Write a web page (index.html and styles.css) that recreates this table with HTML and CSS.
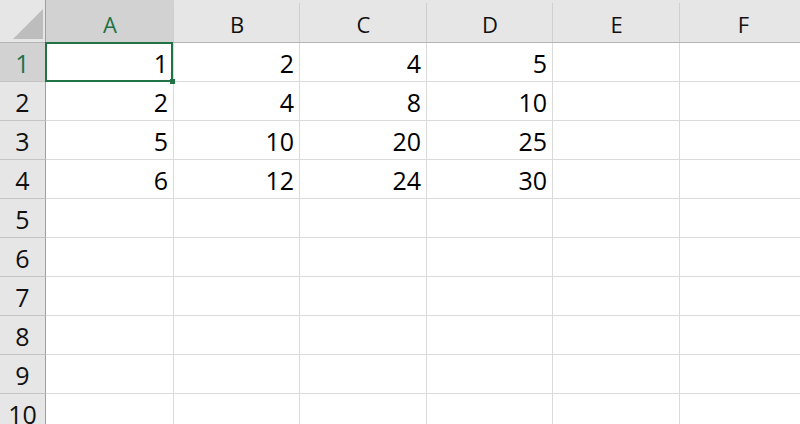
FILE: index.html
```html
<!DOCTYPE html>
<html>
<head>
<meta charset="utf-8">
<link rel="stylesheet" href="styles.css">
</head>
<body>
<div class="sheet">
  <div class="corner"><svg width="46" height="43" viewBox="0 0 46 43"><polygon points="13,39 43,39 43,9" fill="#bdbdbd"/></svg></div>
  <div class="colhead sel">A</div>
  <div class="colhead">B</div>
  <div class="colhead">C</div>
  <div class="colhead">D</div>
  <div class="colhead">E</div>
  <div class="colhead">F</div>

  <div class="rowhead sel">1</div>
  <div class="cell active">1<span class="handle"></span></div>
  <div class="cell">2</div><div class="cell">4</div><div class="cell">5</div><div class="cell"></div><div class="cell"></div>

  <div class="rowhead">2</div>
  <div class="cell">2</div><div class="cell">4</div><div class="cell">8</div><div class="cell">10</div><div class="cell"></div><div class="cell"></div>

  <div class="rowhead">3</div>
  <div class="cell">5</div><div class="cell">10</div><div class="cell">20</div><div class="cell">25</div><div class="cell"></div><div class="cell"></div>

  <div class="rowhead">4</div>
  <div class="cell">6</div><div class="cell">12</div><div class="cell">24</div><div class="cell">30</div><div class="cell"></div><div class="cell"></div>

  <div class="rowhead">5</div>
  <div class="cell"></div><div class="cell"></div><div class="cell"></div><div class="cell"></div><div class="cell"></div><div class="cell"></div>
  <div class="rowhead">6</div>
  <div class="cell"></div><div class="cell"></div><div class="cell"></div><div class="cell"></div><div class="cell"></div><div class="cell"></div>
  <div class="rowhead">7</div>
  <div class="cell"></div><div class="cell"></div><div class="cell"></div><div class="cell"></div><div class="cell"></div><div class="cell"></div>
  <div class="rowhead">8</div>
  <div class="cell"></div><div class="cell"></div><div class="cell"></div><div class="cell"></div><div class="cell"></div><div class="cell"></div>
  <div class="rowhead">9</div>
  <div class="cell"></div><div class="cell"></div><div class="cell"></div><div class="cell"></div><div class="cell"></div><div class="cell"></div>
  <div class="rowhead">10</div>
  <div class="cell"></div><div class="cell"></div><div class="cell"></div><div class="cell"></div><div class="cell"></div><div class="cell"></div>
</div>
</body>
</html>
```

FILE: styles.css
```css
html, body {
  margin: 0;
  padding: 0;
  background: #ffffff;
}
.sheet {
  width: 800px;
  height: 424px;
  overflow: hidden;
  display: grid;
  grid-template-columns: 46px 128px 126px 127px 126px 127px 127px;
  grid-template-rows: 43px repeat(10, 39px);
  font-family: "Open Sans", "Noto Sans", sans-serif;
  color: #1e1e1e;
}
.sheet > div {
  box-sizing: border-box;
}
.corner {
  background: #e6e6e6;
  border-right: 1px solid #9e9e9e;
  border-bottom: 1px solid #b4b4b4;
}
.corner svg {
  display: block;
}
.colhead {
  background-color: #e6e6e6;
  background-image: linear-gradient(#cfcfcf, #cfcfcf);
  background-repeat: no-repeat;
  background-position: right bottom;
  background-size: 1px 39px;
  border-bottom: 1px solid #b4b4b4;
  display: flex;
  align-items: center;
  justify-content: center;
  padding-top: 5px;
  font-size: 22px;
  color: #111111;
}
.colhead.sel {
  background-color: #d2d2d2;
  color: #217346;
}
.rowhead {
  background: #e6e6e6;
  border-right: 1px solid #9e9e9e;
  border-bottom: 1px solid #c4c4c4;
  display: flex;
  align-items: center;
  justify-content: center;
  padding-top: 1px;
  font-size: 25px;
  color: #111111;
}
.rowhead.sel {
  background: #d2d2d2;
  color: #217346;
}
.cell {
  border-right: 1px solid #dadada;
  border-bottom: 1px solid #dadada;
  display: flex;
  align-items: center;
  justify-content: flex-end;
  padding-right: 5px;
  padding-top: 2px;
  font-size: 25px;
  color: #000000;
}
.cell.active {
  position: relative;
}
.cell.active::after {
  content: "";
  position: absolute;
  left: -1px;
  top: -1px;
  right: 0;
  bottom: -1px;
  border: 2px solid #217346;
}
.handle {
  position: absolute;
  right: -2px;
  bottom: -3px;
  width: 5px;
  height: 5px;
  background: #217346;
  z-index: 2;
}
```
